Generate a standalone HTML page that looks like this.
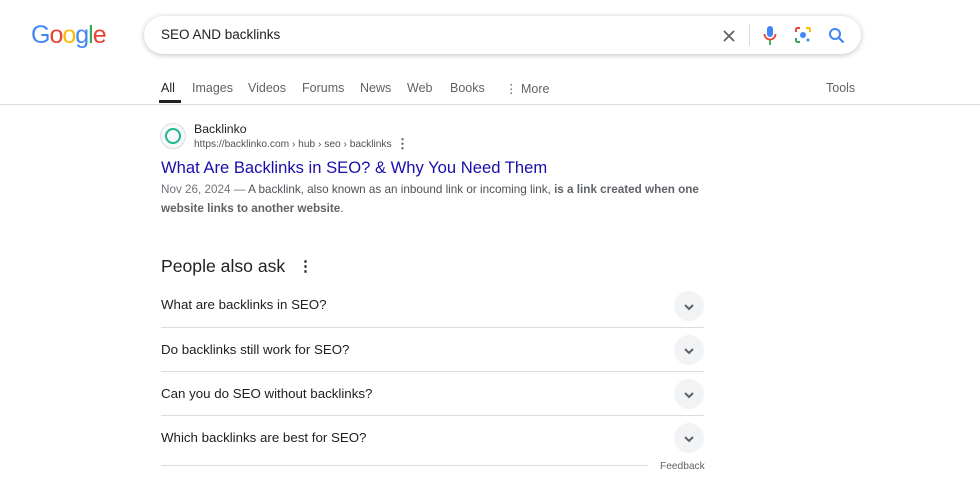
<!DOCTYPE html>
<html><head><meta charset="utf-8"><style>
*{margin:0;padding:0;box-sizing:border-box}
body{width:980px;height:493px;background:#fff;font-family:"Liberation Sans",Arial,sans-serif;position:relative;overflow:hidden;color:#202124}
.abs{position:absolute;white-space:nowrap}
.logo{left:31px;top:21px;font-size:25px;letter-spacing:-1px;font-weight:400}
.search{left:144px;top:16px;width:717px;height:38px;border-radius:20px;box-shadow:0 1px 6px rgba(32,33,36,.28);background:#fff}
.q{left:161px;top:27px;font-size:13.5px;color:#202124}
.tabs{top:81px;font-size:12.5px;color:#5f6368}
.line{left:0;top:104px;width:980px;height:1px;background:#dadce0}
.sn{font-size:11.7px;color:#4d5156;line-height:19px;white-space:normal}
.paa{font-size:13.3px;color:#202124}
.sep{left:161px;width:543px;height:1px;background:#dadce0}
.chev{left:674px;width:30px;height:30px;border-radius:50%;background:#f1f3f4}
</style></head><body>
<div class="abs logo"><span style="color:#4285f4">G</span><span style="color:#ea4335">o</span><span style="color:#fbbc05">o</span><span style="color:#4285f4">g</span><span style="color:#34a853">l</span><span style="color:#ea4335">e</span></div>
<div class="abs search"></div>
<div class="abs q">SEO AND backlinks</div>
<svg class="abs" style="left:721px;top:28px" width="16" height="16" viewBox="0 0 16 16"><path d="M3 3L13 13M13 3L3 13" stroke="#5f6368" stroke-width="1.8"/></svg>
<div class="abs" style="left:749px;top:24px;width:1px;height:22px;background:#dadce0"></div>
<svg class="abs" style="left:762px;top:25px" width="16" height="22" viewBox="0 0 16 22"><rect x="5" y="1" width="6" height="11" rx="3" fill="#4285f4"/><path d="M2.5 9a5.5 5.5 0 0 0 11 0" stroke="#ea4335" stroke-width="1.8" fill="none"/><path d="M8 15v5" stroke="#34a853" stroke-width="1.8"/></svg>
<svg class="abs" style="left:794px;top:26px" width="18" height="18" viewBox="0 0 18 18"><path d="M2 6V3.5A1.5 1.5 0 0 1 3.5 2H6" stroke="#ea4335" stroke-width="2" fill="none"/><path d="M12 2h2.5A1.5 1.5 0 0 1 16 3.5V6" stroke="#fbbc05" stroke-width="2" fill="none"/><path d="M2 12v2.5A1.5 1.5 0 0 0 3.5 16H6" stroke="#34a853" stroke-width="2" fill="none"/><circle cx="9" cy="9" r="3" fill="#4285f4"/><circle cx="14" cy="14" r="1.5" fill="#4285f4"/></svg>
<svg class="abs" style="left:828px;top:27px" width="17" height="17" viewBox="0 0 17 17"><circle cx="7" cy="7" r="5" stroke="#4285f4" stroke-width="2" fill="none"/><path d="M10.5 10.5L15.5 15.5" stroke="#4285f4" stroke-width="2.2"/></svg>

<div class="abs tabs" style="left:161px;color:#202124">All</div>
<div class="abs" style="left:159px;top:100px;width:22px;height:3px;background:#202124"></div>
<div class="abs tabs" style="left:192px">Images</div>
<div class="abs tabs" style="left:248px">Videos</div>
<div class="abs tabs" style="left:302px">Forums</div>
<div class="abs tabs" style="left:360px">News</div>
<div class="abs tabs" style="left:407px">Web</div>
<div class="abs tabs" style="left:450px">Books</div>
<div class="abs tabs" style="left:505px">⋮ More</div>
<div class="abs tabs" style="left:826px">Tools</div>
<div class="abs line"></div>

<div class="abs" style="left:160px;top:123px;width:26px;height:26px;border-radius:50%;border:1px solid #dadce0;background:#f8f9fa"></div>
<div class="abs" style="left:165px;top:128px;width:16px;height:16px;border-radius:50%;border:2.5px solid #1fb58f"></div>
<div class="abs" style="left:194px;top:122px;font-size:12.3px;color:#202124">Backlinko</div>
<div class="abs" style="left:194px;top:139px;font-size:10.2px;color:#4d5156">https://backlinko.com › hub › seo › backlinks</div>
<div class="abs" style="left:396px;top:136px;font-size:13px;color:#4d5156;font-weight:bold">⋮</div>
<div class="abs" style="left:161px;top:158px;font-size:16.6px;color:#1a0dab">What Are Backlinks in SEO? &amp; Why You Need Them</div>
<div class="abs sn" style="left:161px;top:180px;width:548px"><span style="color:#70757a">Nov 26, 2024 — </span>A backlink, also known as an inbound link or incoming link, <b style="color:#5f6368">is a link created when one website links to another website</b>.</div>

<div class="abs" style="left:161px;top:256px;font-size:17.6px;color:#202124">People also ask</div>
<div class="abs" style="left:298px;top:257px;font-size:15px;color:#202124;font-weight:bold">⋮</div>

<div class="abs paa" style="left:161px;top:297px">What are backlinks in SEO?</div>
<div class="abs chev" style="top:291px"></div>
<div class="abs sep" style="top:327px"></div>
<div class="abs paa" style="left:161px;top:342px">Do backlinks still work for SEO?</div>
<div class="abs chev" style="top:335px"></div>
<div class="abs sep" style="top:371px"></div>
<div class="abs paa" style="left:161px;top:386px">Can you do SEO without backlinks?</div>
<div class="abs chev" style="top:379px"></div>
<div class="abs sep" style="top:415px"></div>
<div class="abs paa" style="left:161px;top:430px">Which backlinks are best for SEO?</div>
<div class="abs chev" style="top:423px"></div>
<svg class="abs" style="left:682px;top:300px" width="14" height="150" viewBox="0 0 14 150"><g stroke="#5f6368" stroke-width="2" fill="none"><path d="M3 5l4 4 4-4"/><path d="M3 49l4 4 4-4"/><path d="M3 93l4 4 4-4"/><path d="M3 137l4 4 4-4"/></g></svg>
<div class="abs" style="left:161px;top:465px;width:487px;height:1px;background:#dadce0"></div>
<div class="abs" style="left:660px;top:461px;font-size:10.2px;color:#5f6368">Feedback</div>
</body></html>
